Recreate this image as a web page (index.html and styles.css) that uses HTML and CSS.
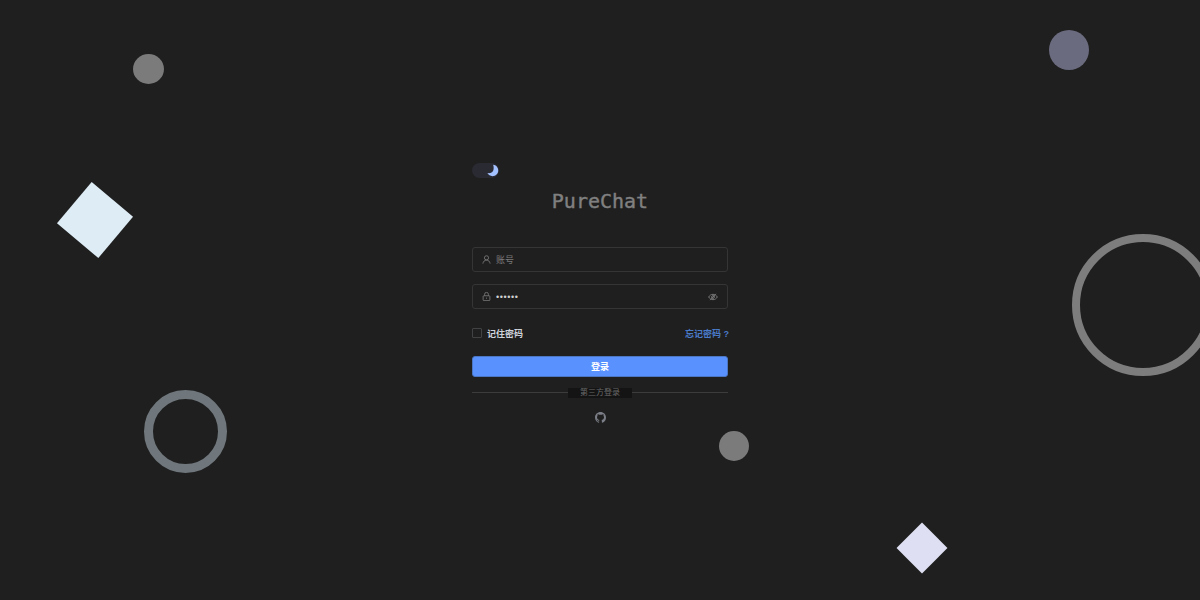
FILE: index.html
```html
<!DOCTYPE html>
<html lang="zh-CN">
<head>
    <meta charset="UTF-8">
    <meta name="viewport" content="width=device-width, initial-scale=1.0">
    <title>PureChat</title>
    <link rel="stylesheet" href="styles.css">
</head>
<body>
    <!-- background shapes -->
    <div class="shape dot dot-left"></div>
    <div class="shape dot dot-top"></div>
    <div class="shape dot dot-mid"></div>
    <div class="shape ring ring-right"></div>
    <div class="shape ring ring-left"></div>
    <div class="shape diamond diamond-left"></div>
    <div class="shape diamond diamond-bottom"></div>

    <div class="login-box">
        <div class="theme-switch">
            <svg class="moon" viewBox="0 0 12 12" width="13" height="13">
                <path d="M6.500.8C9.300 1 11.300 3.300 11.300 6c0 2.900-2.400 5.200-5.300 5.200-2 0-3.800-1.100-4.700-2.800 3 .5 5.400-1 5.700-3.600C7.200 3.500 7.100 2 6.500.8z" fill="#a3c0ff"/>
            </svg>
        </div>
        <h1 class="title">PureChat</h1>

        <form class="login-form">
            <div class="input-wrap">
                <svg class="input-icon" viewBox="0 0 12 12" width="9" height="9" fill="none" stroke="#7d7d7d" stroke-width="1.100">
                    <circle cx="6" cy="3.800" r="2.800"/>
                    <path d="M1.200 11.500c.3-2.900 2.300-4.700 4.800-4.700s4.500 1.800 4.800 4.700"/>
                </svg>
                <span class="placeholder">账号</span>
            </div>
            <div class="input-wrap">
                <svg class="input-icon" viewBox="0 0 12 12" width="9" height="9" fill="none" stroke="#7d7d7d" stroke-width="1.100">
                    <rect x="1.500" y="5" width="9" height="6.500" rx="1"/>
                    <path d="M3.500 5V3a2.500 2.500 0 0 1 5 0v2M6 7.500v1.500"/>
                </svg>
                <span class="password-dots">••••••</span>
                <svg class="eye-icon" viewBox="0 0 12 12" width="10" height="10" fill="none" stroke="#767676" stroke-width="1.200">
                    <path d="M.8 6C2 3.900 3.800 2.800 6 2.800S10 3.900 11.200 6C10 8.100 8.200 9.200 6 9.200S2 8.100.8 6z"/>
                    <circle cx="6" cy="6" r="1.700"/>
                    <path d="M2.500 9.800l7-7.600"/>
                </svg>
            </div>

            <div class="options">
                <label class="remember"><span class="check"></span>记住密码</label>
                <a class="forgot" href="#">忘记密码 ?</a>
            </div>

            <button class="submit" type="button">登录</button>
        </form>

        <div class="divider"><span>第三方登录</span></div>

        <div class="third-party">
            <svg viewBox="0 0 16 16" width="11" height="11" fill="#7b7e86">
                <path d="M8 0C3.580 0 0 3.580 0 8c0 3.540 2.290 6.530 5.470 7.590.4.070.55-.17.55-.38 0-.19-.01-.82-.01-1.490-2.010.37-2.530-.49-2.690-.94-.09-.23-.48-.94-.82-1.130-.28-.15-.68-.52-.01-.53.63-.01 1.080.58 1.230.82.720 1.210 1.870.870 2.330.660.070-.520.280-.870.510-1.070-1.780-.2-3.640-.890-3.640-3.950 0-.870.310-1.590.820-2.150-.080-.2-.360-1.020.080-2.120 0 0 .670-.210 2.200.820.640-.180 1.320-.270 2-.270s1.360.090 2 .270c1.530-1.040 2.200-.820 2.200-.820.440 1.100.160 1.920.080 2.120.510.560.820 1.270.820 2.150 0 3.070-1.870 3.750-3.650 3.950.290.250.540.730.540 1.480 0 1.070-.010 1.930-.010 2.200 0 .210.150.460.550.380A8.010 8.010 0 0 0 16 8c0-4.420-3.580-8-8-8z"/>
            </svg>
        </div>
    </div>
</body>
</html>
```

FILE: styles.css
```css
body {
    margin: 0;
    height: 600px;
    overflow: hidden;
    position: relative;
    background-color: #1f1f1f;
    font-family: "Liberation Sans", "Noto Sans CJK SC", sans-serif;
    display: flex;
    justify-content: center;
    align-items: flex-start;
}

/* background shapes */
.shape {
    position: absolute;
    box-sizing: border-box;
}

.dot {
    border-radius: 50%;
    background: #7b7b7b;
}

.dot-left {
    left: 133px;
    top: 54px;
    width: 31px;
    height: 30px;
}

.dot-top {
    left: 1049px;
    top: 30px;
    width: 40px;
    height: 40px;
    background: #6a6b7f;
}

.dot-mid {
    left: 719px;
    top: 431px;
    width: 30px;
    height: 30px;
}

.ring {
    border-radius: 50%;
    border: 8px solid #7d7d7d;
}

.ring-right {
    left: 1072px;
    top: 234px;
    width: 142px;
    height: 142px;
}

.ring-left {
    left: 144px;
    top: 390px;
    width: 83px;
    height: 83px;
    border-width: 9px;
    border-color: #6f777c;
}

.diamond-left {
    left: 68px;
    top: 193px;
    width: 54px;
    height: 54px;
    background: #deecf5;
    transform: rotate(40deg);
}

.diamond-bottom {
    left: 904px;
    top: 530px;
    width: 36px;
    height: 36px;
    background: #dedff2;
    transform: rotate(45deg);
}

/* login */
.login-box {
    width: 256px;
    padding-top: 163px;
    position: relative;
}

.theme-switch {
    width: 27px;
    height: 15px;
    border-radius: 8px;
    background: #2a2a33;
    display: flex;
    justify-content: flex-end;
    align-items: center;
}

.moon {
    display: block;
}

.title {
    margin: 10px 0 0;
    height: 27px;
    line-height: 27px;
    font-family: "DejaVu Sans Mono", monospace;
    font-size: 20px;
    font-weight: normal;
    -webkit-text-stroke: 0.4px #808080;
    text-align: center;
    color: #808080;
}

.login-form {
    margin-top: 32px;
}

.input-wrap {
    box-sizing: border-box;
    height: 25px;
    margin-bottom: 12px;
    padding: 0 9px;
    border: 1px solid #353535;
    border-radius: 3px;
    display: flex;
    align-items: center;
    gap: 5px;
    font-size: 9px;
}

.input-icon,
.eye-icon {
    flex: none;
}

.placeholder {
    color: #7a7a7a;
}

.password-dots {
    flex: 1;
    color: #d0d0d0;
    font-size: 9px;
    letter-spacing: 0.6px;
}

.options {
    margin-top: 19px;
    height: 10px;
    display: flex;
    justify-content: space-between;
    align-items: center;
    font-size: 9px;
    font-weight: bold;
}

.remember {
    display: flex;
    align-items: center;
    gap: 5px;
    color: #cfd3dc;
}

.check {
    box-sizing: border-box;
    width: 10px;
    height: 10px;
    border: 1px solid #414243;
    border-radius: 1px;
}

.forgot {
    margin-right: -1px;
    color: #4a7bc9;
    text-decoration: none;
    white-space: nowrap;
}

.submit {
    display: block;
    width: 100%;
    height: 21px;
    margin-top: 18px;
    padding: 0;
    border: 1px solid #4a76c4;
    border-radius: 3px;
    background: #5991ff;
    color: #fff;
    font-family: inherit;
    font-size: 9px;
    font-weight: bold;
}

.divider {
    height: 1px;
    margin-top: 15px;
    background: #3c3c3c;
    display: flex;
    justify-content: center;
    align-items: center;
}

.divider span {
    width: 64px;
    height: 10px;
    line-height: 10px;
    background: #141414;
    color: #6a6a6a;
    font-size: 8px;
    text-align: center;
}

.third-party {
    margin-top: 19px;
    display: flex;
    justify-content: center;
}
```
